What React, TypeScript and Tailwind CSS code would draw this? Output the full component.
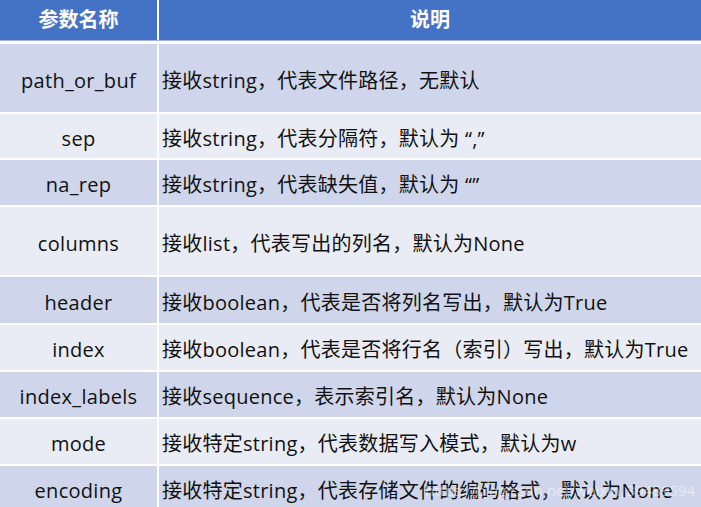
import React from "react";

const rows: { name: string; desc: string; h: string }[] = [
  { name: "path_or_buf", desc: "接收string，代表文件路径，无默认", h: "h-[68px]" },
  { name: "sep", desc: "接收string，代表分隔符，默认为 “,”", h: "h-[44px]" },
  { name: "na_rep", desc: "接收string，代表缺失值，默认为 “”", h: "h-[45px]" },
  { name: "columns", desc: "接收list，代表写出的列名，默认为None", h: "h-[68px]" },
  { name: "header", desc: "接收boolean，代表是否将列名写出，默认为True", h: "h-[46px]" },
  { name: "index", desc: "接收boolean，代表是否将行名（索引）写出，默认为True", h: "h-[45px]" },
  { name: "index_labels", desc: "接收sequence，表示索引名，默认为None", h: "h-[45px]" },
  { name: "mode", desc: "接收特定string，代表数据写入模式，默认为w", h: "h-[45px]" },
  { name: "encoding", desc: "接收特定string，代表存储文件的编码格式，默认为None", h: "h-[45px]" },
];

const App = () => {
  return (
    <div
      className="relative w-[701px] h-[507px] overflow-hidden bg-white text-[#111]"
      style={{ fontFamily: '"Open Sans", "Noto Sans CJK SC", sans-serif' }}
    >
      <div className="grid grid-cols-[157px_1fr] gap-x-[2px] h-[41px] bg-white border-b border-[#9fb5e1]">
        <div className="bg-[#4472c4] flex items-center justify-center text-white font-bold text-[20px]">
          参数名称
        </div>
        <div className="bg-[#4472c4] flex items-center justify-center text-white font-bold text-[20px]">
          说明
        </div>
      </div>
      <div className="flex flex-col gap-[2px] mt-[3px]">
        {rows.map((r, i) => (
          <div key={r.name} className={`grid grid-cols-[157px_1fr] gap-x-[2px] ${r.h}`}>
            <div
              className={`flex items-center justify-center text-[20px] tracking-[0.3px] pt-[5px] ${
                i % 2 === 0 ? "bg-[#cfd5ea]" : "bg-[#e9ebf5]"
              }`}
            >
              {r.name}
            </div>
            <div
              className={`flex items-center pl-[3px] text-[20px] tracking-[0.25px] pt-[5px] whitespace-nowrap ${
                i % 2 === 0 ? "bg-[#cfd5ea]" : "bg-[#e9ebf5]"
              }`}
            >
              {r.desc}
            </div>
          </div>
        ))}
      </div>
      <div className="absolute left-[425px] top-[479px] text-[15px] text-white/50 whitespace-nowrap">
        https://blog.csdn.net/weixin_39489594
      </div>
    </div>
  );
};

export default App;
